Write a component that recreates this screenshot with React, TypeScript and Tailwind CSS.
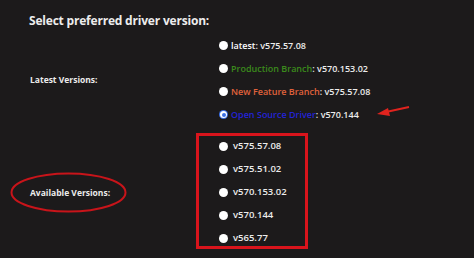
const latest = [
  { name: 'latest', color: 'text-white', version: 'v575.57.08' },
  { name: 'Production Branch', color: 'text-[#3b8a1c]', version: 'v570.153.02' },
  { name: 'New Feature Branch', color: 'text-[#e0623c]', version: 'v575.57.08' },
  { name: 'Open Source Driver', color: 'text-[#2323d6]', version: 'v570.144', checked: true },
];

const available = ['v575.57.08', 'v575.51.02', 'v570.153.02', 'v570.144', 'v565.77'];

function Radio({ checked }: { checked?: boolean }) {
  if (checked) {
    return (
      <span className="flex h-[9px] w-[9px] flex-shrink-0 items-center justify-center rounded-full bg-[#3b6fe6]">
        <span className="flex h-[7px] w-[7px] items-center justify-center rounded-full bg-white">
          <span className="h-[4px] w-[4px] rounded-full bg-[#3b6fe6]" />
        </span>
      </span>
    );
  }
  return <span className="h-[9px] w-[9px] flex-shrink-0 rounded-full bg-white" />;
}

export default function App() {
  return (
    <div
      className="relative h-[258px] w-[474px] overflow-hidden bg-[#1c1a1b] text-[#ececec]"
      style={{ fontFamily: '"Open Sans", "Noto Sans", sans-serif' }}
    >
      <h1 className="pl-[29px] pt-[12px] text-[12px] font-bold leading-[18px] tracking-[-0.2px]">
        Select preferred driver version:
      </h1>

      <div className="mt-[4px] flex">
        <div className="flex w-[196px] items-center pl-[30px] text-[8.5px] font-bold">Latest Versions:</div>
        <div className="flex flex-col pl-[23px]">
          {latest.map(l => (
            <div key={l.name} className="flex h-[23px] items-center gap-[3px] text-[9px] font-semibold">
              <Radio checked={l.checked} />
              <span>
                <span className={l.color}>{l.name}</span>: {l.version}
              </span>
            </div>
          ))}
        </div>
      </div>

      <div className="mt-[7px] flex">
        <div className="flex w-[196px] items-center pl-[30px] pt-[4px] text-[8.5px] font-bold">Available Versions:</div>
        <div className="flex h-[116px] w-[112px] flex-col gap-[10px] border-[3px] border-[#d8141c] pl-[20px] pt-[4px]">
          {available.map(v => (
            <div key={v} className="flex h-[13px] items-center gap-[5px] text-[9.5px] font-semibold">
              <Radio />
              <span>{v}</span>
            </div>
          ))}
        </div>
      </div>

      <svg className="pointer-events-none absolute left-0 top-0" width="474" height="258">
        <ellipse cx="68.5" cy="192.5" rx="57" ry="19" fill="none" stroke="#c8141a" strokeWidth="2" />
        <line x1="409" y1="107" x2="386" y2="112" stroke="#e0231e" strokeWidth="2" />
        <polygon points="377,114 388,108 390,116" fill="#e0231e" />
      </svg>
    </div>
  );
}
